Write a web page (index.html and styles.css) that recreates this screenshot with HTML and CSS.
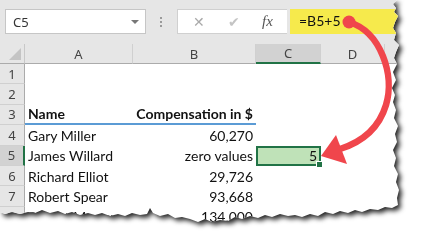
FILE: index.html
```html
<!DOCTYPE html>
<html lang="en">
<head>
    <meta charset="UTF-8">
    <meta name="viewport" content="width=device-width, initial-scale=1.0">
    <title>Formula zero values</title>
    <link rel="stylesheet" href="styles.css">
</head>
<body>
    <div class="paper-wrap">
        <div class="paper">
            <div class="toolbar">
                <div class="name-box">
                    <span>C5</span>
                    <span class="drop"></span>
                </div>
                <div class="dots"><i></i><i></i><i></i></div>
                <div class="fx-buttons">
                    <span class="btn cancel">&#x2715;</span>
                    <span class="btn enter">&#x2714;</span>
                    <span class="btn fx">fx</span>
                </div>
                <div class="formula">=B5+5</div>
            </div>

            <div class="sheet">
                <div class="corner"><span class="tri"></span></div>
                <div class="col-head">A</div>
                <div class="col-head">B</div>
                <div class="col-head active">C</div>
                <div class="col-head">D</div>
                <div class="col-head"></div>

                <div class="row-head">1</div>
                <div class="cell"></div><div class="cell"></div><div class="cell"></div><div class="cell"></div><div class="cell"></div>

                <div class="row-head">2</div>
                <div class="cell"></div><div class="cell"></div><div class="cell"></div><div class="cell"></div><div class="cell"></div>

                <div class="row-head">3</div>
                <div class="cell head">Name</div>
                <div class="cell head num">Compensation in $</div>
                <div class="cell"></div><div class="cell"></div><div class="cell"></div>

                <div class="row-head">4</div>
                <div class="cell">Gary Miller</div>
                <div class="cell num">60,270</div>
                <div class="cell"></div><div class="cell"></div><div class="cell"></div>

                <div class="row-head active">5</div>
                <div class="cell">James Willard</div>
                <div class="cell num">zero values</div>
                <div class="cell num selected">5<span class="handle"></span></div>
                <div class="cell"></div><div class="cell"></div>

                <div class="row-head">6</div>
                <div class="cell">Richard Elliot</div>
                <div class="cell num">29,726</div>
                <div class="cell"></div><div class="cell"></div><div class="cell"></div>

                <div class="row-head">7</div>
                <div class="cell">Robert Spear</div>
                <div class="cell num">93,668</div>
                <div class="cell"></div><div class="cell"></div><div class="cell"></div>

                <div class="row-head">8</div>
                <div class="cell">Robert Murray</div>
                <div class="cell num">134,000</div>
                <div class="cell"></div><div class="cell"></div><div class="cell"></div>
            </div>

            <!-- callout arrow from the formula to the result cell -->
            <svg class="arrow" width="422" height="241" viewBox="0 0 422 241">
                <path d="M349,22 C381,32 395,75 386,105 C379,128 362,142 340,149" fill="none" stroke="#f0464c" stroke-width="6.5" stroke-linecap="round"/>
                <circle cx="349" cy="22" r="6.5" fill="#f0464c"/>
                <polygon points="321,156 336,135 347,164" fill="#f0464c"/>
            </svg>
        </div>
    </div>
</body>
</html>
```

FILE: styles.css
```css
body {
    margin: 0;
    background-color: #ffffff;
    width: 422px;
    height: 241px;
    overflow: hidden;
}

.paper-wrap {
    filter: drop-shadow(3px 3px 2.5px rgba(0, 0, 0, 0.85));
}

.paper {
    position: relative;
    width: 400px;
    height: 228px;
    background-color: #ffffff;
    overflow: hidden;
    clip-path: polygon(0 0, 397px 0, 393px 4px, 396px 8px, 394px 12px, 398px 16px, 395px 22px, 393px 28px, 396px 33px, 394px 40px, 399px 45px, 396px 52px, 394px 58px, 397px 64px, 393px 72px, 396px 80px, 392px 88px, 395px 95px, 393px 102px, 396px 110px, 394px 118px, 398px 126px, 395px 134px, 397px 142px, 393px 150px, 396px 158px, 394px 166px, 398px 174px, 396px 182px, 399px 190px, 397px 198px, 398px 205px, 392px 208px, 385px 207px, 378px 210px, 370px 209px, 362px 212px, 355px 210px, 348px 213px, 340px 211px, 333px 214px, 325px 212px, 318px 216px, 310px 214px, 302px 217px, 295px 215px, 288px 216px, 280px 214px, 272px 217px, 265px 215px, 258px 218px, 250px 216px, 242px 219px, 235px 217px, 228px 221px, 220px 220px, 212px 222px, 205px 219px, 198px 222px, 190px 219px, 182px 217px, 175px 218px, 168px 214px, 160px 216px, 153px 213px, 150px 208px, 147px 214px, 140px 215px, 132px 213px, 125px 216px, 118px 214px, 110px 216px, 102px 213px, 95px 215px, 88px 213px, 80px 215px, 72px 212px, 65px 214px, 58px 211px, 50px 213px, 42px 210px, 35px 213px, 28px 212px, 20px 214px, 12px 212px, 5px 214px, 0 212px);
}

/* formula bar */
.toolbar {
    display: flex;
    align-items: flex-start;
    height: 44px;
    box-sizing: border-box;
    padding: 9px 0 0 5px;
    background-color: #e6e6e6;
    font-family: "Noto Sans", sans-serif;
}

.name-box {
    display: flex;
    align-items: center;
    justify-content: space-between;
    width: 141px;
    height: 25px;
    box-sizing: border-box;
    padding: 0 6px 0 7px;
    background-color: #ffffff;
    border: 1px solid #c6c6c6;
    font-size: 13px;
    color: #333333;
}

.drop {
    width: 0;
    height: 0;
    border-left: 4px solid transparent;
    border-right: 4px solid transparent;
    border-top: 4px solid #777777;
}

.dots {
    display: flex;
    flex-direction: column;
    gap: 2px;
    width: 3px;
    margin: 8px 14px 0 14px;
}

.dots i {
    display: block;
    width: 2px;
    height: 2px;
    background-color: #9a9a9a;
}

.fx-buttons {
    display: flex;
    align-items: center;
    width: 110px;
    height: 25px;
    box-sizing: border-box;
    background-color: #ffffff;
    border: 1px solid #d0d0d0;
    border-right: none;
}

.btn {
    color: #a9a9a9;
    font-size: 14px;
}

.cancel {
    margin-left: 15px;
}

.enter {
    margin-left: 23px;
    color: #c4c4c4;
}

.fx {
    margin-left: 22px;
    font-family: "Liberation Serif", serif;
    font-style: italic;
    font-size: 15px;
    color: #555555;
}

.formula {
    flex: 1;
    height: 25px;
    box-sizing: border-box;
    margin-left: 3px;
    padding: 3px 0 0 9px;
    background-color: #f6ea4c;
    font-family: "Lato", sans-serif;
    font-size: 14px;
    color: #111111;
}

/* worksheet grid */
.sheet {
    display: grid;
    grid-template-columns: 25px 108px 123px 65px 64px 1fr;
    grid-template-rows: 20px repeat(8, 20.4px);
    font-family: "Lato", sans-serif;
    font-size: 14px;
    color: #111111;
}

.corner {
    position: relative;
    background-color: #e6e6e6;
    border-right: 1px solid #c8c8c8;
    border-bottom: 1px solid #ababab;
}

.tri {
    position: absolute;
    right: 3px;
    bottom: 3px;
    width: 0;
    height: 0;
    border-left: 12px solid transparent;
    border-bottom: 12px solid #c4c4c4;
}

.col-head {
    display: flex;
    align-items: center;
    justify-content: center;
    background-color: #e6e6e6;
    border-right: 1px solid #d0d0d0;
    border-bottom: 1px solid #ababab;
    font-family: "Noto Sans", sans-serif;
    font-size: 13px;
    color: #444444;
}

.col-head.active {
    background-color: #d2d2d2;
    border-bottom: 2px solid #217346;
}

.row-head {
    display: flex;
    align-items: center;
    justify-content: center;
    background-color: #e6e6e6;
    border-right: 1px solid #ababab;
    border-bottom: 1px solid #d0d0d0;
    font-family: "Noto Sans", sans-serif;
    font-size: 13px;
    color: #444444;
}

.row-head.active {
    background-color: #d2d2d2;
    border-right: 2px solid #217346;
}

.cell {
    display: flex;
    align-items: center;
    padding: 0 3px;
    white-space: nowrap;
    overflow: visible;
}

.cell.num {
    justify-content: flex-end;
}

.cell.head {
    font-weight: bold;
    border-bottom: 2px solid #5b9bd5;
}

.cell.selected {
    position: relative;
    background-color: #bfe2b8;
    border: 2px solid #217346;
    padding: 0 2px;
}

.handle {
    position: absolute;
    right: -4px;
    bottom: -4px;
    width: 5px;
    height: 5px;
    background-color: #217346;
    border: 1px solid #ffffff;
}

.arrow {
    position: absolute;
    top: 0;
    left: 0;
    pointer-events: none;
}
```
